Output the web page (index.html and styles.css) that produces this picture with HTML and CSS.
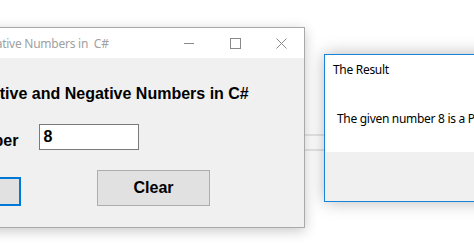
FILE: index.html
```html
<!DOCTYPE html>
<html lang="en">
<head>
  <meta charset="UTF-8">
  <title>Positive and Negative Numbers in C#</title>
  <link rel="stylesheet" href="styles.css">
</head>
<body>
  <div class="desktop">
    <div class="back-lines"></div>

    <div class="window main-window">
      <div class="title-bar">
        <span class="title-text">Positive and Negative Numbers in&nbsp; C#</span>
        <div class="controls">
          <span class="ctrl">
            <svg width="10" height="10" viewBox="0 0 10 10"><path d="M0 5.5H10" stroke="#8a8a8a" stroke-width="1"/></svg>
          </span>
          <span class="ctrl">
            <svg width="11" height="11" viewBox="0 0 11 11"><rect x="0.5" y="0.5" width="10" height="10" fill="none" stroke="#8a8a8a" stroke-width="1"/></svg>
          </span>
          <span class="ctrl">
            <svg width="11" height="11" viewBox="0 0 11 11"><path d="M0.5 0.5L10.5 10.5M10.5 0.5L0.5 10.5" stroke="#8a8a8a" stroke-width="1"/></svg>
          </span>
        </div>
      </div>
      <div class="form-body">
        <h1 class="heading">Positive and Negative Numbers in C#</h1>
        <div class="input-row">
          <label class="number-label" for="number">Number</label>
          <input class="number-input" type="text" id="number" value="8">
        </div>
        <div class="button-row">
          <button class="check-button">Check</button>
          <button class="clear-button">Clear</button>
        </div>
      </div>
    </div>

    <div class="window result-window">
      <div class="result-body">
        <p class="result-title">The Result</p>
        <p class="result-text">The given number 8 is a Positive Number</p>
      </div>
      <div class="result-footer"></div>
    </div>
  </div>
</body>
</html>
```

FILE: styles.css
```css
body {
    margin: 0;
    background-color: #fff;
    font-family: 'Liberation Sans', Arial, sans-serif;
}

.desktop {
    position: relative;
    width: 474px;
    height: 249px;
    overflow: hidden;
    background-color: #fff;
}

/* window lying behind, only its edge shows between the two */
.back-lines {
    position: absolute;
    left: 250px;
    top: 134px;
    width: 100px;
    height: 13px;
    border-top: 2px solid #e6e6e6;
    border-bottom: 2px solid #e6e6e6;
}

.window {
    position: absolute;
    box-sizing: border-box;
}

.main-window {
    left: -120px;
    top: 27px;
    width: 425px;
    height: 201px;
    border: 1px solid #a9a9a9;
    background-color: #f0f0f0;
    box-shadow: 0 3px 12px rgba(0, 0, 0, 0.22);
    display: flex;
    flex-direction: column;
}

.title-bar {
    height: 30px;
    background-color: #fff;
    display: flex;
    align-items: center;
}

.title-text {
    flex: 1;
    padding-left: 24px;
    font-family: 'Noto Sans', sans-serif;
    font-size: 12px;
    letter-spacing: -0.25px;
    color: #a0a0a0;
    white-space: nowrap;
    overflow: hidden;
}

.controls {
    display: flex;
    height: 100%;
}

.ctrl {
    width: 46px;
    display: flex;
    align-items: center;
    justify-content: center;
}

.form-body {
    flex: 1;
    padding: 27px 0 0 28px;
}

.heading {
    margin: 0 0 0 57px;
    font-size: 16px;
    line-height: 18px;
    font-weight: bold;
    color: #000;
    white-space: nowrap;
}

.input-row {
    display: flex;
    align-items: flex-start;
    margin-top: 21px;
    margin-left: 49px;
    gap: 21px;
}

.number-label {
    padding-top: 8px;
    font-size: 16px;
    line-height: 18px;
    font-weight: bold;
}

.number-input {
    box-sizing: border-box;
    width: 100px;
    height: 26px;
    margin: 0;
    padding: 0 3px;
    border: 1px solid #7a7a7a;
    background-color: #fff;
    font-family: 'Liberation Sans', Arial, sans-serif;
    font-size: 16px;
    font-weight: bold;
    color: #000;
}

.button-row {
    display: flex;
    align-items: flex-start;
    margin-top: 20px;
    gap: 76px;
}

.check-button {
    box-sizing: border-box;
    width: 112px;
    height: 29px;
    margin-top: 7px;
    border: 2px solid #0078d7;
    background-color: #e1e1e1;
    font-family: 'Liberation Sans', Arial, sans-serif;
    font-size: 16px;
    font-weight: bold;
}

.clear-button {
    box-sizing: border-box;
    width: 113px;
    height: 36px;
    border: 1px solid #adadad;
    background-color: #e1e1e1;
    font-family: 'Liberation Sans', Arial, sans-serif;
    font-size: 16px;
    font-weight: bold;
    color: #000;
    padding: 0;
}

.result-window {
    left: 324px;
    top: 54px;
    width: 200px;
    height: 148px;
    border: 1px solid #1883d7;
    background-color: #fff;
    box-shadow: 0 0 16px rgba(0, 0, 0, 0.28);
    display: flex;
    flex-direction: column;
    font-family: 'Noto Sans', sans-serif;
    font-size: 12px;
    letter-spacing: -0.3px;
    color: #000;
}

.result-body {
    height: 97px;
    background-color: #fff;
}

.result-title {
    margin: 0;
    padding: 7px 0 0 8px;
    line-height: 16px;
}

.result-text {
    margin: 0;
    padding: 33px 0 0 12px;
    line-height: 16px;
    white-space: nowrap;
}

.result-footer {
    flex: 1;
    background-color: #f0f0f0;
}
```
